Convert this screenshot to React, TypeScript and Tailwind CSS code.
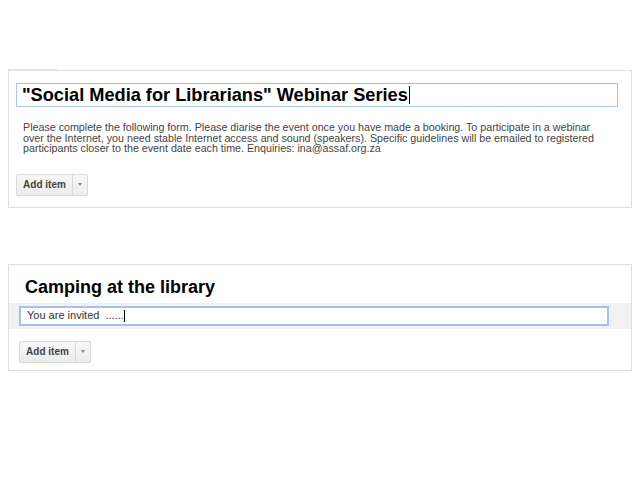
import React from 'react';

function AddItemButton() {
  return (
    <div className="flex h-[22px] w-[72px] border border-[#d9d9d9] bg-gradient-to-b from-[#f7f7f7] to-[#ececec] rounded-[2px]">
      <div className="flex w-[55px] items-center justify-center text-[10px] font-bold text-[#444]">Add item</div>
      <div className="flex flex-1 items-center justify-center border-l border-[#d9d9d9]">
        <div className="h-0 w-0 border-x-[2.5px] border-t-[3px] border-x-transparent border-t-[#888]" />
      </div>
    </div>
  );
}

export default function App() {
  return (
    <div className="min-h-[478px] w-[638px] bg-white pl-2 pt-[70px] font-['Liberation_Sans',Arial,sans-serif]">
      <div className="relative w-[624px] border border-[#dedede] bg-white pb-[11px] pl-[7px] pr-[12px] pt-[12px]">
        <div className="absolute -left-px -top-[2px] h-[2px] w-[50px] bg-[#e4e4e4]" />
        <div className="flex h-[24px] w-[602px] items-center border border-[#a9c2ea] px-[5px]">
          <span className="text-[18.2px] font-bold leading-none text-black">"Social Media for Librarians" Webinar Series</span>
          <span className="ml-px h-[18px] w-px bg-black" />
        </div>
        <div className="mt-[15px] pl-[7px] text-[10.7px] leading-[10.5px] text-[#444]">
          <p>Please complete the following form. Please diarise the event once you have made a booking. To participate in a webinar</p>
          <p>over the Internet, you need stable Internet access and sound (speakers). Specific guidelines will be emailed to registered</p>
          <p>participants closer to the event date each time. Enquiries: ina@assaf.org.za</p>
        </div>
        <div className="mt-[20px]">
          <AddItemButton />
        </div>
      </div>

      <div className="mt-[56px] w-[624px] border border-[#dedede] bg-white pb-[7px]">
        <div className="px-4 pb-[5px] pt-[11px] text-[18px] font-bold leading-[22px] text-black">Camping at the library</div>
        <div className="bg-[#f1f1f1] py-[3px] pl-[10px] pr-[22px]">
          <div className="flex h-[20px] items-center border-2 border-[#a6c1ee] bg-white px-[6px]">
            <span className="whitespace-pre text-[11px] text-[#333]">You are invited  ......</span>
            <span className="h-[12px] w-px bg-black" />
          </div>
        </div>
        <div className="ml-[10px] mt-[12px]">
          <AddItemButton />
        </div>
      </div>
    </div>
  );
}
